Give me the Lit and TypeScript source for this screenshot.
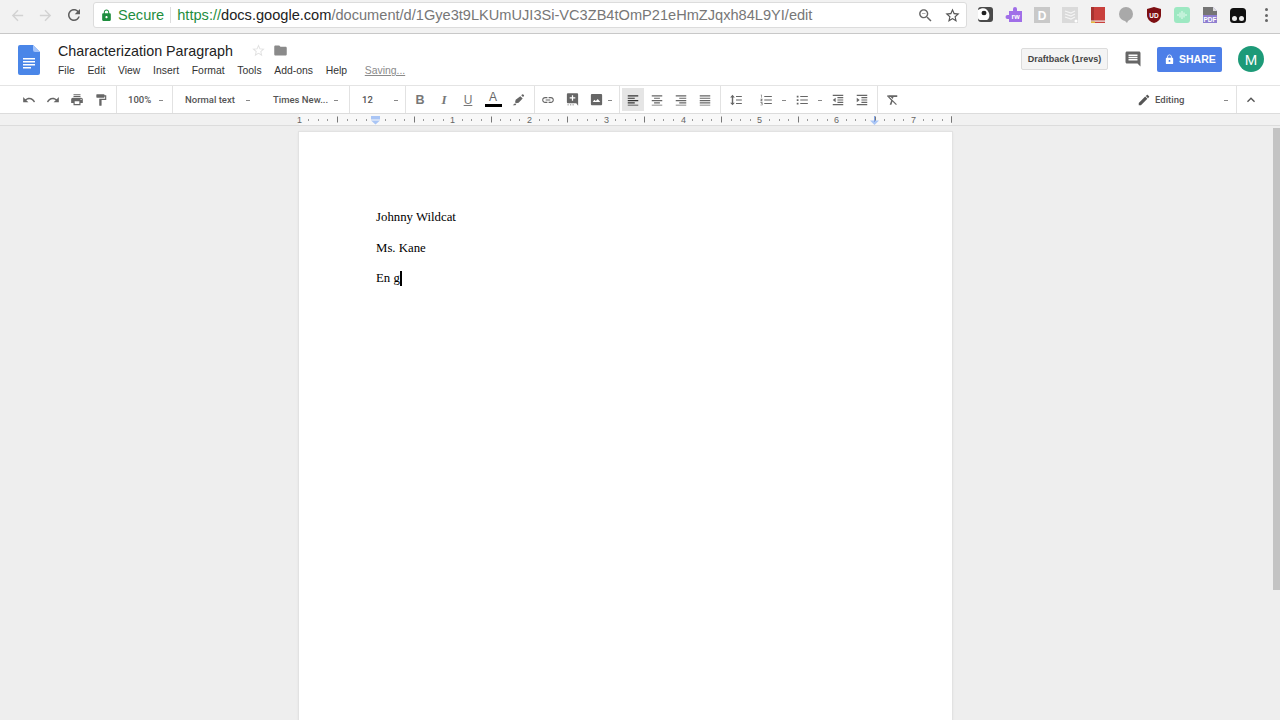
import { LitElement, html, css, svg } from "lit";
import { customElement } from "lit/decorators.js";

const P = {
  back: "M20 11H7.83l5.59-5.59L12 4l-8 8 8 8 1.41-1.41L7.83 13H20v-2z",
  forward: "M12 4l-1.41 1.41L16.17 11H4v2h12.17l-5.58 5.59L12 20l8-8z",
  refresh: "M17.65 6.35C16.2 4.9 14.21 4 12 4c-4.42 0-7.99 3.58-7.99 8s3.57 8 7.99 8c3.73 0 6.84-2.55 7.73-6h-2.08c-.82 2.33-3.04 4-5.65 4-3.31 0-6-2.69-6-6s2.69-6 6-6c1.66 0 3.14.69 4.22 1.78L13 11h7V4l-2.35 2.35z",
  lock: "M18 8h-1V6c0-2.76-2.24-5-5-5S7 3.24 7 6v2H6c-1.1 0-2 .9-2 2v10c0 1.1.9 2 2 2h12c1.1 0 2-.9 2-2V10c0-1.1-.9-2-2-2zm-6 9c-1.1 0-2-.9-2-2s.9-2 2-2 2 .9 2 2-.9 2-2 2zm3.1-9H8.9V6c0-1.71 1.39-3.1 3.1-3.1 1.71 0 3.1 1.39 3.1 3.1v2z",
  zoomOut: "M15.5 14h-.79l-.28-.27C15.41 12.59 16 11.11 16 9.5 16 5.91 13.09 3 9.5 3S3 5.91 3 9.5 5.91 16 9.5 16c1.61 0 3.09-.59 4.23-1.57l.27.28v.79l5 4.99L20.49 19l-4.99-5zm-6 0C7.01 14 5 11.99 5 9.5S7.01 5 9.5 5 14 7.01 14 9.5 11.99 14 9.5 14zM7 9h5v1H7z",
  star: "M22 9.24l-7.19-.62L12 2 9.19 8.63 2 9.24l5.46 4.73L5.82 21 12 17.27 18.18 21l-1.63-7.03L22 9.24zM12 15.4l-3.76 2.27 1-4.28-3.32-2.88 4.38-.38L12 6.1l1.71 4.04 4.38.38-3.32 2.88 1 4.28L12 15.4z",
  folder: "M10 4H4c-1.1 0-1.99.9-1.99 2L2 18c0 1.1.9 2 2 2h16c1.1 0 2-.9 2-2V8c0-1.1-.9-2-2-2h-8l-2-2z",
  comment: "M20 2H4c-1.1 0-2 .9-2 2v12c0 1.1.9 2 2 2h14l4 4V4c0-1.1-.9-2-2-2zm-2 12H6v-2h12v2zm0-3H6V9h12v2zm0-3H6V6h12v2z",
  undo: "M12.5 8c-2.65 0-5.05.99-6.9 2.6L2 7v9h9l-3.62-3.62c1.39-1.16 3.16-1.88 5.12-1.88 3.54 0 6.55 2.31 7.6 5.5l2.37-.78C21.08 11.03 17.15 8 12.5 8z",
  redo: "M18.4 10.6C16.55 8.99 14.15 8 11.5 8c-4.65 0-8.58 3.03-9.96 7.22L3.9 16c1.05-3.19 4.05-5.5 7.6-5.5 1.95 0 3.73.72 5.12 1.88L13 16h9V7l-3.6 3.6z",
  print: "M19 8H5c-1.66 0-3 1.34-3 3v6h4v4h12v-4h4v-6c0-1.66-1.34-3-3-3zm-3 11H8v-5h8v5zm3-7c-.55 0-1-.45-1-1s.45-1 1-1 1 .45 1 1-.45 1-1 1zM18 2H6v2h12zM18 5H6v2h12z",
  paint: "M18 4V3c0-.55-.45-1-1-1H5c-.55 0-1 .45-1 1v4c0 .55.45 1 1 1h12c.55 0 1-.45 1-1V6h1v4H9v11c0 .55.45 1 1 1h2c.55 0 1-.45 1-1v-9h8V4h-3z",
  marker: "M16 5.500L20 9.500 13 16.500 8.500 17.500 7 16 8 11.500zM17.500 4l1.500-1.500a1.400 1.400 0 0 1 2 0l1 1a1.400 1.400 0 0 1 0 2L20.500 7zM7 17.500L9 19.500 7.500 21H3z",
  link: "M3.9 12c0-1.71 1.39-3.1 3.1-3.1h4V7H7c-2.76 0-5 2.24-5 5s2.24 5 5 5h4v-1.9H7c-1.71 0-3.1-1.39-3.1-3.1zM8 13h8v-2H8v2zm9-6h-4v1.9h4c1.71 0 3.1 1.39 3.1 3.1s-1.39 3.1-3.1 3.1h-4V17h4c2.76 0 5-2.24 5-5s-2.24-5-5-5z",
  addComment: "M5 2h14c1.1 0 2 .9 2 2v14H5c-1.1 0-2-.9-2-2V4c0-1.1.9-2 2-2zm6 3v3.500H7.500v2H11V14h2v-3.500h3.500v-2H13V5h-2zM4 20h2v1H4zm4 0h2v1H8zm4 0h2v1h-2zm6-2h3v4z",
  image: "M21 19V5c0-1.1-.9-2-2-2H5c-1.1 0-2 .9-2 2v14c0 1.1.9 2 2 2h14c1.1 0 2-.9 2-2zM8.500 12.500l2.500 2.010L14 11l4 5H6l2.500-3.500z",
  alignLeft: "M3 4h18v2H3zM3 8h12v2H3zM3 12h18v2H3zM3 16h12v2H3zM3 20h18v1.600H3z",
  alignCenter: "M3 4h18v2H3zM7 8h10v2H7zM3 12h18v2H3zM7 16h10v2H7zM3 20h18v1.600H3z",
  alignRight: "M3 4h18v2H3zM9 8h12v2H9zM3 12h18v2H3zM9 16h12v2H9zM3 20h18v1.600H3z",
  justify: "M3 4h18v2H3zM3 8h18v2H3zM3 12h18v2H3zM3 16h18v2H3zM3 20h18v1.600H3z",
  spacing: "M6 3l4 4.500H7.200v9H10L6 21l-4-4.500h2.800v-9H2zM12 5h10v2H12zM12 11h10v2H12zM12 17h10v2H12z",
  numbered: "M9 5h13v2H9zM9 11h13v2H9zM9 17h13v2H9zM3 3h2v5H4V4H3zM2.500 10H6v1l-2 2h2v1H2.500v-1l2-2h-2zM2.500 16H6v5H2.500v-1H5v-1H3.500v-1H5v-1H2.500z",
  bulleted: "M9 5h13v2H9zM9 11h13v2H9zM9 17h13v2H9zM3 4.500h3v3H3zM3 10.500h3v3H3zM3 16.500h3v3H3z",
  outdent: "M3 3h18v2H3zM3 19h18v2H3zM11 7h10v2H11zM11 11h10v2H11zM11 15h10v2H11zM8 8v8l-5-4z",
  indent: "M3 3h18v2H3zM3 19h18v2H3zM11 7h10v2H11zM11 11h10v2H11zM11 15h10v2H11zM3 8v8l5-4z",
  clear: "M5 4h16v3h-6.400l-1.300 3.400-2.800-2.800L10 7H8zM3.300 5.100l1.400-1.400 15.600 15.600-1.400 1.400-6.100-6.100L11 20H8l2.600-7.300z",
  pencil: "M3 17.250V21h3.750L17.810 9.940l-3.750-3.750L3 17.250zM20.710 7.040c.39-.39.39-1.020 0-1.410l-2.340-2.340c-.39-.39-1.020-.39-1.410 0l-1.830 1.830 3.750 3.750 1.830-1.830z",
  less: "M12 8l-6 6 1.410 1.410L12 10.830l4.590 4.580L18 14z",
};

const ic = (d: string, size = 14, cls = "") =>
  html`<svg class="ic ${cls}" width=${size} height=${size} viewBox="0 0 24 24"><path d=${d}></path></svg>`;

type Cell = { w: number; kind: string; v?: string; pad?: number; size?: number };
const icon = (v: string, w = 24, size = 14): Cell => ({ w, kind: "icon", v, size });
const gap = (w: number): Cell => ({ w, kind: "gap" });
const sep: Cell = { w: 1, kind: "sep" };
const arrow = (w = 12): Cell => ({ w, kind: "arrow" });
const txt = (v: string, w: number, pad: number): Cell => ({ w, kind: "text", v, pad });

const CELLS: Cell[] = [
  gap(17), icon(P.undo), icon(P.redo), icon(P.print), icon(P.paint), gap(3), sep,
  txt("100%", 38, 11), arrow(), gap(5), sep,
  txt("Normal text", 69, 12), arrow(), txt("Times New...", 76, 19), arrow(), gap(7), sep,
  txt("12", 40, 12), arrow(), gap(3), sep,
  gap(2), { w: 24, kind: "b", v: "B" }, { w: 24, kind: "i", v: "I" }, { w: 24, kind: "u", v: "U" },
  gap(1), { w: 24, kind: "color", v: "A" }, gap(1), icon(P.marker), gap(4), sep,
  gap(1), icon(P.link), icon(P.addComment, 24, 15), icon(P.image, 24, 15), arrow(4), gap(7), sep,
  gap(1), { w: 24, kind: "active", v: P.alignLeft }, icon(P.alignCenter), icon(P.alignRight), icon(P.justify), gap(3), sep,
  gap(3), icon(P.spacing), gap(6), icon(P.numbered), arrow(), icon(P.bulleted), arrow(), icon(P.outdent), icon(P.indent), gap(3), sep,
  gap(2), icon(P.clear),
];

const EXT = [
  svg`<rect x="1" y="1" width="15" height="15" rx="3" fill="#4a4a4a"/><path d="M1 4c5-3 9-2 11 3 1 3 0 6-2 7H3c-1 0-2-1-2-2z" fill="#fff"/><ellipse cx="7" cy="7" rx="2.500" ry="2.300" fill="#222"/>`,
  svg`<path d="M4 5h4V3a2 2 0 0 1 4 0v2h5v11H4v-3H2.500a2 2 0 0 1 0-4H4z" fill="#a06ee8"/><text x="10.500" y="13" font-size="7" font-weight="700" fill="#fff" text-anchor="middle" font-family="Liberation Sans">rw</text>`,
  svg`<rect x="1" y="1" width="16" height="16" fill="#c9c9c9"/><text x="9" y="13.500" font-size="12" font-weight="700" fill="#fff" text-anchor="middle" font-family="Liberation Sans">D</text>`,
  svg`<rect x="1" y="1" width="16" height="16" fill="#dadada"/><path d="M4 5l6 2 4-2M4 8l6 2 4-2M4 11l6 2 4-2" stroke="#f4f4f4" stroke-width="1.200" fill="none"/><circle cx="15" cy="15" r="1.500" fill="#fff"/>`,
  svg`<rect x="2" y="1" width="14" height="16" fill="#c9403c"/><rect x="2" y="1" width="3" height="16" fill="#a8332f"/><rect x="2" y="14.500" width="14" height="1.200" fill="#eee"/><rect x="2" y="15.500" width="4" height="1.500" fill="#e5b93c"/>`,
  svg`<circle cx="9" cy="8" r="7" fill="#a9a9a9"/><path d="M6 13l4 4 2-4z" fill="#a9a9a9"/>`,
  svg`<path d="M9 1l7 2v6c0 4-3 7-7 8-4-1-7-4-7-8V3z" fill="#7d0f12"/><text x="9" y="11.500" font-size="6.500" font-weight="700" fill="#fff" text-anchor="middle" font-family="Liberation Sans">UD</text>`,
  svg`<rect x="1" y="1" width="16" height="16" rx="3" fill="#9de8c2"/><path d="M5 8v2M7 6.500v5M9 5v8M11 6.500v5M13 8v2" stroke="#e6fbf0" stroke-width="1" fill="none"/>`,
  svg`<path d="M2 1h10l4 4v12H2z" fill="#8f7fd0"/><path d="M2 1h10v4h4v4H2z" fill="#757575"/><path d="M12 1l4 4h-4z" fill="#ddd"/><text x="9" y="15.500" font-size="6.500" font-weight="700" fill="#fff" text-anchor="middle" font-family="Liberation Sans">PDF</text>`,
  svg`<rect x="1" y="2" width="16" height="15" rx="3.500" fill="#111"/><circle cx="5.500" cy="12.500" r="2.500" fill="#eee"/><circle cx="12.500" cy="12.500" r="2.500" fill="#eee"/>`,
];

const MENUS = ["File", "Edit", "View", "Insert", "Format", "Tools", "Add-ons", "Help"];
const ORIGIN = 375.4;
const INCH = 76.8;
const rulerTicks = () => {
  const out = [];
  for (let i = -8; i <= 60; i++) {
    const x = Math.round(ORIGIN + (i * INCH) / 8) + 0.5;
    if (i % 8 === 0) {
      if (i !== 0 && i !== 60)
        out.push(svg`<text x=${x} y="9" class="rnum" text-anchor="middle">${Math.abs(i / 8)}</text>`);
    } else if (i % 4 === 0) {
      out.push(svg`<rect x=${x - 0.5} y="2.500" width="1" height="6" fill="#777"></rect>`);
    } else {
      out.push(svg`<rect x=${x - 0.5} y="5" width="1" height="2" fill="#999"></rect>`);
    }
  }
  return out;
};

@customElement("app-root")
export class AppRoot extends LitElement {
  static styles = css`
    :host { display: flex; flex-direction: column; width: 1280px; height: 720px; overflow: hidden; background: #eee; font-family: "Liberation Sans", Arial, sans-serif; color: #333; }
    .ic { fill: currentColor; display: block; flex: none; }

    .chrome { height: 33px; flex: none; display: flex; align-items: center; background: #f2f2f2; border-bottom: 1px solid #c8c8c8; box-sizing: content-box; }
    .nav { display: flex; align-items: center; padding-left: 3px; width: 93px; box-sizing: border-box; margin-top: -3px; }
    .nav span { width: 28.500px; display: flex; justify-content: center; }
    .dim { color: #d2d2d2; }
    .reload { color: #5f5f5f; }
    .omni { width: 874px; height: 26px; box-sizing: border-box; display: flex; align-items: center; background: #fff; border: 1px solid #dcdcdc; border-radius: 3px; margin-top: -3px; font-size: 14.600px; white-space: nowrap; }
    .secure { color: #1e8e3e; display: flex; align-items: center; gap: 5px; padding: 0 6px 0 6px; border-right: 1px solid #ddd; height: 16px; }
    .url { color: #777; padding-left: 6px; flex: 1; }
    .url b { font-weight: 400; color: #1e8e3e; }
    .url i { font-style: normal; color: #222; }
    .omni-ic { color: #666; display: flex; gap: 10px; padding-right: 5px; }
    .omni-ic .s { color: #555; }
    .exts { display: flex; padding-left: 5px; align-items: center; margin-top: -3px; }
    .exts span { width: 28px; display: flex; justify-content: center; }
    .dots { display: flex; flex-direction: column; gap: 2.500px; align-items: center; }
    .dots i { width: 3px; height: 3px; border-radius: 50%; background: #666; display: block; }

    .head { height: 52px; flex: none; background: #fff; display: flex; align-items: flex-start; box-sizing: border-box; border-bottom: 1px solid #e4e4e4; }
    .logo { width: 22px; height: 30px; margin: 11px 18px 0 18px; flex: none; display: block; }
    .titles { padding-top: 8px; }
    .title-row { display: flex; align-items: center; height: 17px; }
    .title { font-size: 14.300px; color: #222; width: 193px; white-space: nowrap; }
    .star { color: #e2e2e2; margin-right: 7px; }
    .folder { color: #8a8a8a; }
    .menu { display: flex; gap: 12.700px; font-size: 10.400px; color: #333; margin-top: 6px; }
    .saving { color: #8a8a8a; text-decoration: underline; margin-left: 5px; }
    .grow { flex: 1; }
    .right { display: flex; align-items: center; padding-top: 12px; padding-right: 16px; }
    .draft { width: 87px; height: 22px; box-sizing: border-box; background: #f4f4f4; border: 1px solid #dcdcdc; border-radius: 2px; font-size: 9px; font-weight: 700; color: #444; display: flex; align-items: center; justify-content: center; white-space: nowrap; }
    .cmt { color: #666; margin: 0 15px 0 16px; }
    .share { width: 65px; height: 25px; background: #4d7fe8; color: #fff; border-radius: 2px; font-size: 10.500px; font-weight: 700; display: flex; align-items: center; gap: 4px; padding-left: 7px; box-sizing: border-box; }
    .avatar { width: 26px; height: 26px; border-radius: 50%; background: #1d9a78; color: #fff; margin-left: 16px; font-size: 15px; display: flex; align-items: center; justify-content: center; }

    .bar { height: 28px; flex: none; background: #fff; display: flex; align-items: stretch; color: #666; box-sizing: border-box; border-bottom: 1px solid #dcdcdc; }
    .cell { display: flex; align-items: center; justify-content: center; flex: none; box-sizing: border-box; }
    .sep { background: #e2e2e2; }
    .text { justify-content: flex-start; font-family: Roboto, sans-serif; font-size: 9.500px; font-weight: 500; color: #555; white-space: nowrap; }
    .arrowc::after { content: ""; width: 4px; height: 1px; background: #888; display: block; margin-top: 2px; flex: none; }
    .b { font-weight: 700; font-size: 12.500px; color: #777; }
    .i { font-style: italic; font-family: "Liberation Serif", serif; font-weight: 700; font-size: 13px; color: #777; }
    .u { font-size: 12px; color: #777; text-decoration: underline; }
    .color { flex-direction: column; font-size: 12px; color: #666; line-height: 11px; }
    .color i { display: block; width: 17px; height: 2.500px; background: #000; margin-top: 1px; }
    .active { color: #333; }
    .active > div { width: 22px; height: 23px; background: #e5e5e5; display: flex; align-items: center; justify-content: center; }
    .editing { display: flex; align-items: center; font-family: Roboto, sans-serif; font-size: 9.500px; font-weight: 500; color: #555; margin-left: auto; }
    .editing .lab { margin-left: 4px; width: 65px; }
    .editing .sepv { width: 1px; height: 27px; background: #e2e2e2; margin-left: 4px; }
    .chev { width: 28px; display: flex; justify-content: center; margin-right: 15px; color: #555; }

    .ruler { height: 12px; flex: none; display: block; background: #f1f1f1; border-bottom: 1px solid #dcdcdc; box-sizing: border-box; }
    .rnum { font-family: "Liberation Sans", sans-serif; font-size: 9px; fill: #666; }

    .canvas { flex: 1; position: relative; overflow: hidden; min-height: 0; }
    .page { width: 653px; height: 700px; margin: 6px 0 0 299px; background: #fff; box-sizing: border-box; box-shadow: 0 0 0 1px #e2e2e2, 0 0 3px rgba(0,0,0,.1); padding: 70px 0 0 77px; font-family: "Liberation Serif", serif; font-size: 12.800px; color: #000; line-height: 30.700px; }
    .line { display: flex; align-items: center; }
    .caret { width: 2px; height: 15px; background: #000; display: block; }
    .thumb { position: absolute; right: 0; top: 2px; width: 7px; height: 462px; background: #c3c3c3; }
  `;

  private renderCell(c: Cell) {
    const s = `width:${c.w}px`;
    switch (c.kind) {
      case "gap": return html`<span class="cell" style=${s}></span>`;
      case "sep": return html`<span class="cell sep" style=${s}></span>`;
      case "icon": return html`<span class="cell" style=${s}>${ic(c.v!, c.size)}</span>`;
      case "arrow": return html`<span class="cell arrowc" style=${s}></span>`;
      case "text": return html`<span class="cell text" style="${s};padding-left:${c.pad}px">${c.v}</span>`;
      case "active": return html`<span class="cell active" style=${s}><div>${ic(c.v!)}</div></span>`;
      case "color": return html`<span class="cell color" style=${s}>${c.v}<i></i></span>`;
      default: return html`<span class="cell ${c.kind}" style=${s}>${c.v}</span>`;
    }
  }

  render() {
    return html`
      <div class="chrome">
        <div class="nav">
          <span class="dim">${ic(P.back, 17)}</span>
          <span class="dim">${ic(P.forward, 17)}</span>
          <span class="reload">${ic(P.refresh, 18)}</span>
        </div>
        <div class="omni">
          <span class="secure">${ic(P.lock, 13)}Secure</span>
          <span class="url"><b>https://</b><i>docs.google.com</i>/document/d/1Gye3t9LKUmUJI3Si-VC3ZB4tOmP21eHmZJqxh84L9YI/edit</span>
          <span class="omni-ic">${ic(P.zoomOut, 17)}<span class="s">${ic(P.star, 17)}</span></span>
        </div>
        <div class="exts">
          ${EXT.map((e) => html`<span><svg width="18" height="18" viewBox="0 0 18 18">${e}</svg></span>`)}
          <span class="dots"><i></i><i></i><i></i></span>
        </div>
      </div>

      <div class="head">
        <svg class="logo" viewBox="0 0 22 30">
          <path d="M2 0h13l7 7v21a2 2 0 0 1-2 2H2a2 2 0 0 1-2-2V2a2 2 0 0 1 2-2z" fill="#4a86e8"></path>
          <path d="M15 0l7 7h-5a2 2 0 0 1-2-2z" fill="#a6c5fa"></path>
          <path d="M5 13h12v1.500H5zM5 16h12v1.500H5zM5 19h12v1.500H5zM5 22h8v1.500H5z" fill="#fff"></path>
        </svg>
        <div class="titles">
          <div class="title-row">
            <span class="title">Characterization Paragraph</span>
            <span class="star">${ic(P.star, 15)}</span>
            <span class="folder">${ic(P.folder, 15)}</span>
          </div>
          <div class="menu">
            ${MENUS.map((m) => html`<span>${m}</span>`)}
            <span class="saving">Saving...</span>
          </div>
        </div>
        <div class="grow"></div>
        <div class="right">
          <div class="draft">Draftback (1revs)</div>
          <span class="cmt">${ic(P.comment, 18)}</span>
          <div class="share">${ic(P.lock, 11)}SHARE</div>
          <div class="avatar">M</div>
        </div>
      </div>

      <div class="bar">
        ${CELLS.map((c) => this.renderCell(c))}
        <div class="editing">
          ${ic(P.pencil, 14)}
          <span class="lab">Editing</span>
          <span class="cell arrowc" style="width:12px"></span>
          <span class="sepv"></span>
          <span class="chev">${ic(P.less, 16)}</span>
        </div>
      </div>

      <svg class="ruler" width="1280" height="11" viewBox="0 0 1280 11" preserveAspectRatio="xMinYMin meet">
        <rect x="299" y="0" width="653" height="11" fill="#f8f8f8"></rect>
        ${rulerTicks()}
        <rect x="951" y="2.500" width="1" height="6" fill="#777"></rect>
        <path d="M371 2h9v3.500h-9zM371 6.500h9l-4.500 4z" fill="#a9c5f5"></path>
        <path d="M870 6.500h9l-4.500 4.500z" fill="#a9c5f5"></path>
        <rect x="874" y="2" width="1" height="6" fill="#7fa3e8"></rect>
      </svg>

      <div class="canvas">
        <div class="page">
          <div class="line">Johnny Wildcat</div>
          <div class="line">Ms. Kane</div>
          <div class="line">En g<span class="caret"></span></div>
        </div>
        <div class="thumb"></div>
      </div>
    `;
  }
}
